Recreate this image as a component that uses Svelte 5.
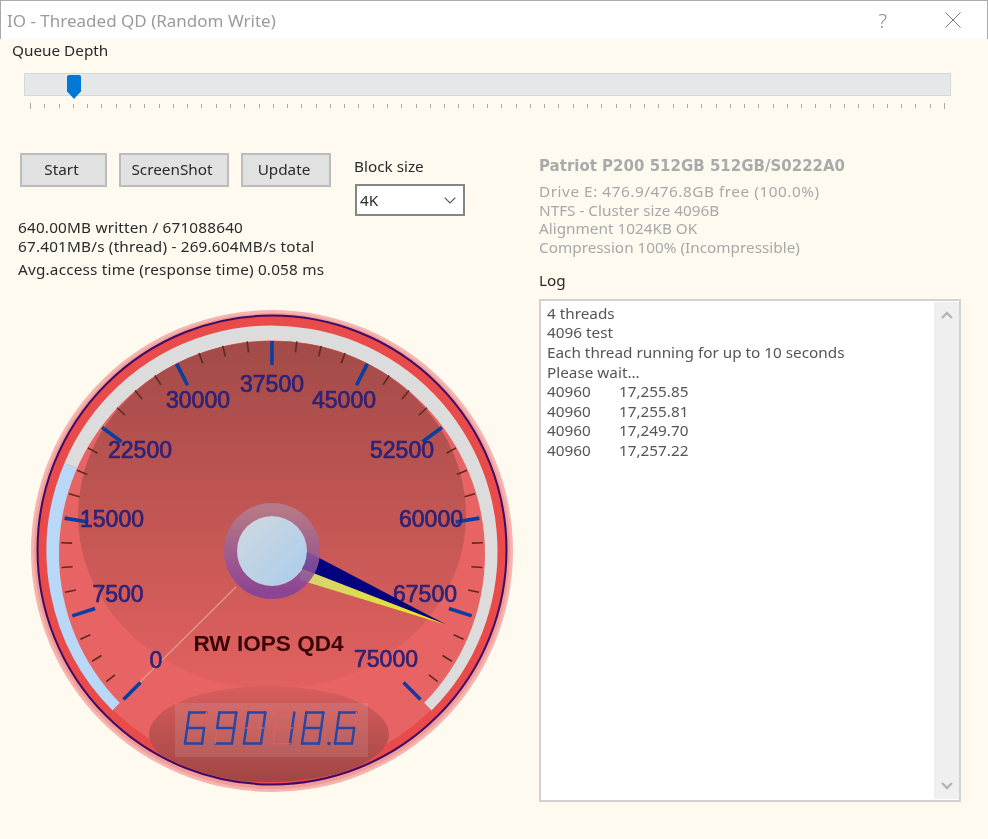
<script>
	const CX = 272;
	const CY = 552;

	const logLines = ['4 threads', '4096 test', 'Each thread running for up to 10 seconds', 'Please wait…'];
	const logRows = [
		['40960', '17,255.85'],
		['40960', '17,255.81'],
		['40960', '17,249.70'],
		['40960', '17,257.22'],
	];

	const sliderTicks = Array.from({ length: 65 }, (_, i) => i);

	// scale labels, centre of each text in page coordinates
	const labels = [
		['0', 156, 660],
		['7500', 118, 594],
		['15000', 112, 519],
		['22500', 140, 450],
		['30000', 198, 400],
		['37500', 272, 384],
		['45000', 344, 400],
		['52500', 402, 450],
		['60000', 431, 519],
		['67500', 425, 594],
		['75000', 386, 659],
	];

	function polar(r, deg) {
		const a = (deg * Math.PI) / 180;
		return [CX + r * Math.sin(a), CY - r * Math.cos(a)];
	}

	function arc(r, from, to) {
		const [x1, y1] = polar(r, from);
		const [x2, y2] = polar(r, to);
		const large = to - from > 180 ? 1 : 0;
		return `M${x1} ${y1}A${r} ${r} 0 ${large} 1 ${x2} ${y2}`;
	}

	// 40 steps over the 270deg sweep, every 4th one is a major tick
	const ticks = Array.from({ length: 41 }, (_, i) => {
		const deg = -135 + i * 6.75;
		const major = i % 4 === 0;
		const [x1, y1] = polar(major ? 186 : 200, deg);
		const [x2, y2] = polar(major ? 210 : 211, deg);
		return { x1, y1, x2, y2, major };
	});

	// seven segment readout: a,b,c,d,e,f,g
	const SEG = {
		0: 'abcdef',
		1: 'bc',
		6: 'acdefg',
		8: 'abcdefg',
		9: 'abcdfg',
	};
	const W = 17;
	const H = 15.5;
	const SL = 0.14;
	const segLine = {
		a: [[0, 0], [W, 0]],
		b: [[W, 0], [W, H]],
		c: [[W, H], [W, 2 * H]],
		d: [[0, 2 * H], [W, 2 * H]],
		e: [[0, H], [0, 2 * H]],
		f: [[0, 0], [0, H]],
		g: [[0, H], [W, H]],
	};
	const digits = [
		{ ch: '6', x: 185 },
		{ ch: '9', x: 215 },
		{ ch: '0', x: 244 },
		{ ch: '1', x: 273 },
		{ ch: '8', x: 302 },
		{ ch: '6', x: 335 },
	];
	function segs(d) {
		return Object.keys(segLine).map((k) => {
			const [[a, b], [c, e]] = segLine[k];
			const skew = (y) => (2 * H - y) * SL;
			return {
				on: SEG[d.ch].includes(k),
				x1: d.x + a + skew(b),
				y1: 713.5 + b,
				x2: d.x + c + skew(e),
				y2: 713.5 + e,
			};
		});
	}
</script>

<div class="window">
	<header class="titlebar">
		<span class="title">IO - Threaded QD (Random Write)</span>
		<span class="help">?</span>
		<svg class="close" width="16" height="16" viewBox="0 0 16 16">
			<path d="M.5.5l15 15M15.5.5l-15 15" stroke="#777" fill="none" />
		</svg>
	</header>

	<div class="content">
		<div class="queue-label">Queue Depth</div>
		<div class="slider">
			<div class="thumb"></div>
		</div>
		<div class="slider-ticks">
			{#each sliderTicks as t}
				<i class:long={t === 0 || t === 64}></i>
			{/each}
		</div>

		<div class="columns">
			<section class="left">
				<div class="controls">
					<button>Start</button>
					<button class="shot">ScreenShot</button>
					<button class="update">Update</button>
					<div class="block">
						<div class="block-label">Block size</div>
						<div class="select">
							<span>4K</span>
							<svg width="12" height="7" viewBox="0 0 12 7">
								<path d="M.7.7L6 6l5.3-5.3" stroke="#555" stroke-width="1.2" fill="none" />
							</svg>
						</div>
					</div>
				</div>

				<div class="info">
					<div>640.00MB written / 671088640</div>
					<div>67.401MB/s (thread) - 269.604MB/s total</div>
					<div class="avg">Avg.access time (response time) 0.058 ms</div>
				</div>

				<svg class="gauge" width="490" height="490" viewBox="28 306 490 490">
					<defs>
						<linearGradient id="dark" x1="0" y1="0" x2="0" y2="1">
							<stop offset="0" stop-color="#a24b48" />
							<stop offset="1" stop-color="#e26160" />
						</linearGradient>
						<linearGradient id="lcd" x1="0" y1="0" x2="0" y2="1">
							<stop offset="0" stop-color="#d85e5d" />
							<stop offset="1" stop-color="#a04644" />
						</linearGradient>
						<linearGradient id="ringfill" x1="0" y1="0" x2="0" y2="1">
							<stop offset="0" stop-color="#b27f90" />
							<stop offset="1" stop-color="#80409e" />
						</linearGradient>
						<linearGradient id="hubfill" x1="0" y1="0" x2="1" y2="1">
							<stop offset="0" stop-color="#cfd8de" />
							<stop offset="1" stop-color="#aacdec" />
						</linearGradient>
						<linearGradient id="yellow" gradientUnits="userSpaceOnUse" x1="300" y1="570" x2="447" y2="626">
							<stop offset="0" stop-color="#d3d376" />
							<stop offset="0.6" stop-color="#e0e040" />
							<stop offset="1" stop-color="#f0f000" />
						</linearGradient>
						<clipPath id="face"><circle cx={CX} cy={CY - 1} r="233" /></clipPath>
					</defs>

					<circle cx={CX} cy={CY} r="241" fill="#f6b4ae" />
					<circle cx={CX} cy={CY} r="238" fill="#f19c97" />
					<circle cx={CX} cy={CY - 1} r="234.5" fill="#e84b4a" stroke="#3f0b66" stroke-width="2" />

					<path d={arc(218, -135, -67)} stroke="#b9d7f6" stroke-width="15" fill="none" />
					<path d={arc(218, -67, 135)} stroke="#dcdcdc" stroke-width="15" fill="none" />

					<!-- lower part of the face has no bezel above it -->
					<path d="M{CX - 159} {CY + 159}A228 228 0 0 0 {CX + 159} {CY + 159}L{CX} {CY}Z" fill="#e86464" />
					<circle cx={CX} cy={CY + 3} r="213" fill="#e86464" />

					<ellipse cx={CX} cy="516" rx="194" ry="174" fill="url(#dark)" />

					<g clip-path="url(#face)">
						<ellipse cx="269" cy="735" rx="120" ry="48" fill="url(#lcd)" />
					</g>
					<rect x="175" y="704" width="193" height="54" fill="#fff" opacity="0.1" />

					<line x1="236" y1="588" x2="140" y2="683" stroke="#dd9c84" stroke-width="1.2" />

					{#each ticks as t}
						<line
							x1={t.x1}
							y1={t.y1}
							x2={t.x2}
							y2={t.y2}
							stroke={t.major ? '#0a3fa0' : '#5b2a26'}
							stroke-width={t.major ? 3.6 : 1.6}
						/>
					{/each}

					{#each labels as [text, x, y]}
						<text class="scale" {x} y={y + 8.5}>{text}</text>
					{/each}
					<text class="unit" x="268.5" y="652">RW IOPS QD4</text>

					<g aria-label="69018.6">
						{#each digits as d}
							{#each segs(d) as s}
								<line
									x1={s.x1}
									y1={s.y1}
									x2={s.x2}
									y2={s.y2}
									stroke={s.on ? '#2547a8' : '#d9605e'}
									stroke-width={s.on ? 2.4 : 1.6}
									stroke-linecap="round"
								/>
							{/each}
						{/each}
						<circle cx="329" cy="744.5" r="1.8" fill="#2547a8" />
					</g>

					<polygon points="306,552 300,569 447,626" fill="#03037f" />
					<polygon points="300,569 300,581 447,626" fill="url(#yellow)" />

					<circle cx={CX} cy={CY} r="41.5" fill="none" stroke="url(#ringfill)" stroke-width="13" opacity="0.85" />
					<circle cx={CX} cy={CY} r="35" fill="url(#hubfill)" />
				</svg>
			</section>

			<section class="right">
				<div class="drive-name">Patriot P200 512GB 512GB/S0222A0</div>
				<div class="drive-info">
					<div class="digits">Drive E: 476.9/476.8GB free (100.0%)</div>
					<div>NTFS - Cluster size 4096B</div>
					<div>Alignment 1024KB OK</div>
					<div>Compression 100% (Incompressible)</div>
				</div>
				<div class="log-label">Log</div>
				<div class="log">
					<div class="log-text">
						{#each logLines as line}
							<div>{line}</div>
						{/each}
						{#each logRows as [a, b]}
							<div class="row"><span>{a}</span><span>{b}</span></div>
						{/each}
					</div>
					<div class="scrollbar">
						<svg width="12" height="8" viewBox="0 0 12 8">
							<path d="M1 7l5-5 5 5" stroke="#b5b5b5" stroke-width="2.4" fill="none" />
						</svg>
						<svg width="12" height="8" viewBox="0 0 12 8">
							<path d="M1 1l5 5 5-5" stroke="#b5b5b5" stroke-width="2.4" fill="none" />
						</svg>
					</div>
				</div>
			</section>
		</div>
	</div>
</div>

<style>
	:global(body) {
		margin: 0;
		background: #fffaf0;
	}

	.window {
		width: 988px;
		height: 839px;
		box-sizing: border-box;
		overflow: hidden;
		background: #fffaf0;
		font-family: 'Noto Sans', sans-serif;
		font-size: 15.3px;
		color: #2a2a2a;
		filter: blur(0.35px);
	}

	.titlebar {
		height: 39px;
		box-sizing: border-box;
		display: flex;
		align-items: center;
		background: #fff;
		border: 1px solid #aaa;
		border-bottom: none;
		padding: 0 26px 0 6px;
	}

	.title {
		flex: 1;
		font-size: 17px;
		color: #9b9b9b;
	}

	.help {
		font-size: 20px;
		font-weight: 300;
		color: #888;
		margin-right: 58px;
	}

	.close {
		display: block;
	}

	.queue-label {
		height: 20px;
		line-height: 20px;
		margin: 1px 0 0 12px;
	}

	.slider {
		position: relative;
		box-sizing: border-box;
		width: 927px;
		height: 23px;
		margin: 13px 0 0 24px;
		background: #e4e8e9;
		border: 1px solid #d6d8d8;
	}

	.thumb {
		position: absolute;
		left: 42px;
		top: 1px;
		width: 14px;
		height: 24px;
		background: #0078d7;
		clip-path: polygon(0 0, 100% 0, 100% 68%, 50% 100%, 0 68%);
		border-radius: 2px 2px 0 0;
	}

	.slider-ticks {
		display: flex;
		justify-content: space-between;
		width: 915px;
		height: 6px;
		margin: 7px 0 0 30px;
	}

	.slider-ticks i {
		display: block;
		width: 1px;
		height: 4px;
		margin-top: 1px;
		background: #a8a8a8;
	}

	.slider-ticks i.long {
		height: 6px;
		margin-top: 0;
	}

	.columns {
		display: flex;
		margin-top: 44px;
	}

	.left {
		width: 519px;
		padding-left: 20px;
		box-sizing: border-box;
	}

	.controls {
		display: flex;
		align-items: flex-start;
		height: 63px;
	}

	button {
		width: 87px;
		height: 34px;
		padding: 0 4px 3px 0;
		background: #e1e1e1;
		border: 2px solid #bcbcbc;
		font: inherit;
		color: #2a2a2a;
		margin-right: 12px;
	}

	button.shot {
		width: 110px;
	}

	button.update {
		width: 90px;
		margin-right: 23px;
	}

	.block-label {
		height: 20px;
		line-height: 20px;
		margin-top: 3px;
	}

	.select {
		display: flex;
		align-items: center;
		justify-content: space-between;
		box-sizing: border-box;
		width: 110px;
		height: 32px;
		margin: 8px 0 0 1px;
		padding: 0 7px 0 3px;
		background: #fff;
		border: 2px solid #858585;
	}

	.info {
		margin: 2px 0 0 -2px;
		line-height: 19px;
		letter-spacing: 0.2px;
	}

	.avg {
		margin-top: 4px;
	}

	.gauge {
		display: block;
		margin: 26px 0 0 8px;
	}

	.scale {
		font-family: 'Liberation Sans', sans-serif;
		font-size: 23px;
		text-anchor: middle;
		fill: #1d2a86;
		stroke: #3d1a66;
		stroke-width: 0.7px;
	}

	.unit {
		font-family: 'Liberation Sans', sans-serif;
		font-size: 22.6px;
		font-weight: 700;
		text-anchor: middle;
		fill: #3a0507;
	}

	.right {
		width: 422px;
		margin-left: 20px;
		color: #a8a8a8;
	}

	.drive-name {
		margin-top: 3px;
		height: 20px;
		line-height: 20px;
		font-family: 'DejaVu Sans', sans-serif;
		font-weight: 700;
		font-size: 15px;
		color: #aaa;
	}

	.drive-info {
		margin-top: 6px;
		line-height: 18.7px;
	}

	.digits {
		letter-spacing: 0.55px;
	}

	.log-label {
		height: 20px;
		line-height: 20px;
		margin-top: 13px;
		color: #2a2a2a;
	}

	.log {
		display: flex;
		box-sizing: border-box;
		width: 422px;
		height: 503px;
		margin-top: 9px;
		background: #fff;
		border: 2px solid #d2d2d2;
	}

	.log-text {
		flex: 1;
		padding: 3px 6px;
		line-height: 19.6px;
		color: #555;
	}

	.row span:first-child {
		display: inline-block;
		width: 72px;
	}

	.scrollbar {
		display: flex;
		flex-direction: column;
		justify-content: space-between;
		align-items: center;
		width: 25px;
		padding: 9px 0;
		box-sizing: border-box;
		background: #efefef;
		margin: 1px 0;
	}
</style>
